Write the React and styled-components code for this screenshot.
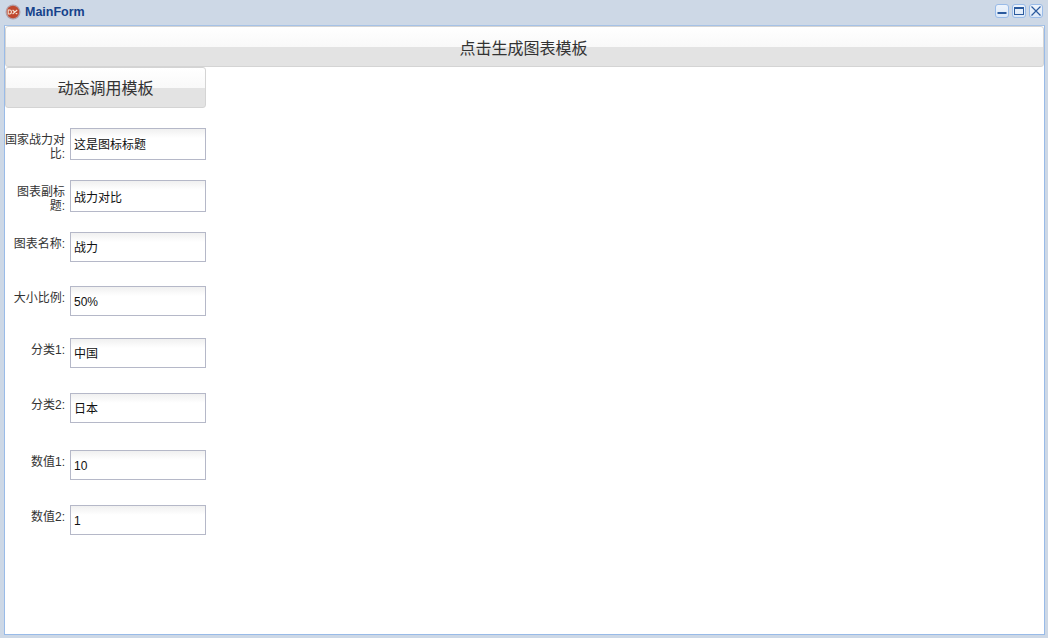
import React from 'react';
import styled, { createGlobalStyle } from 'styled-components';

const Global = createGlobalStyle`
  html, body { margin: 0; padding: 0; background: #cdd8e6; }
  body { font-family: "Liberation Sans", "Noto Sans CJK SC", sans-serif; overflow: hidden; }
`;

const Frame = styled.div`
  width: 1048px;
  height: 638px;
  display: flex;
  flex-direction: column;
  background: #cdd8e6;
  box-sizing: border-box;
  padding: 0 3px 3px 4px;
`;

const TitleBar = styled.div`
  height: 25px;
  flex: none;
  display: flex;
  align-items: center;
  padding-left: 1px;
  margin-right: 2px;
`;

const AppIcon = styled.svg`
  width: 16px;
  height: 16px;
  margin-right: 4px;
  margin-top: -1px;
`;

const Title = styled.div`
  font-size: 12.5px;
  font-weight: bold;
  color: #15428b;
  margin-top: -1px;
  flex: 1;
`;

const WinButtons = styled.div`
  display: flex;
  gap: 3px;
  margin-top: -3px;
`;

const WinButton = styled.div`
  width: 14px;
  height: 14px;
  box-sizing: border-box;
  border: 1px solid #99bbe8;
  border-radius: 3px;
  background: linear-gradient(#eef4fc, #dce8f7);
  display: flex;
  align-items: center;
  justify-content: center;
`;

const Client = styled.div`
  flex: 1;
  background: #fff;
  border: 1px solid #99bbe8;
  border-top-color: #a6c2e6;
  display: flex;
  flex-direction: column;
  min-height: 0;
`;

const Btn = styled.div`
  box-sizing: border-box;
  width: ${p => p.$w};
  height: 41px;
  flex: none;
  border: 1px solid #d4d4d4;
  border-radius: 3px;
  background: linear-gradient(#ffffff 0, #f9f9f9 50%, #e3e3e3 51%, #e3e3e3 100%);
  color: #333;
  font-size: 16px;
  display: flex;
  align-items: center;
  justify-content: center;
  font-family: "DejaVu Sans", "Noto Sans CJK SC", sans-serif;
  padding: 0 ${p => p.$pr || 0}px ${p => p.$pb || 0}px 0;
`;

const Form = styled.div`
  display: flex;
  flex-direction: column;
  padding-top: 20px;
  width: 201px;
`;

const Row = styled.div`
  display: flex;
  align-items: flex-start;
  height: ${p => p.$h}px;
  margin-bottom: ${p => p.$gap}px;
`;

const Label = styled.div`
  width: 60px;
  flex: none;
  text-align: right;
  font-size: 12px;
  line-height: 14px;
  color: #333;
  padding-top: 5px;
  word-break: break-all;
`;

const Field = styled.div`
  box-sizing: border-box;
  margin-left: 5px;
  width: 136px;
  height: 100%;
  border: 1px solid #b5b8c8;
  background: linear-gradient(#f0f0f0 0, #ffffff 9px);
  font-size: 12px;
  color: #111;
  display: flex;
  align-items: center;
  padding: ${p => p.$raised ? '0 0 1px 3px' : '1px 0 0 3px'};
`;

const rows = [
  { label: '国家战力对比:', value: '这是图标标题', h: 32, gap: 20, raised: true },
  { label: '图表副标题:', value: '战力对比', h: 32, gap: 20 },
  { label: '图表名称:', value: '战力', h: 30, gap: 24, raised: true },
  { label: '大小比例:', value: '50%', h: 30, gap: 22 },
  { label: '分类1:', value: '中国', h: 30, gap: 25, raised: true },
  { label: '分类2:', value: '日本', h: 30, gap: 27, raised: true },
  { label: '数值1:', value: '10', h: 30, gap: 25 },
  { label: '数值2:', value: '1', h: 30, gap: 0 },
];

const App = () => (
  <Frame>
    <Global />
    <TitleBar>
      <AppIcon viewBox="0 0 16 16">
        <circle cx="8" cy="8" r="7.5" fill="#b3a0a8" />
        <circle cx="8" cy="8" r="6.2" fill="#c0492f" />
        <path d="M3.2 6h1.6q1.6 0 1.6 2t-1.6 2H3.2zM7.6 6l4.6 4M12.2 6l-4.6 4" stroke="#f4e6d8" strokeWidth="1.1" fill="none" />
      </AppIcon>
      <Title>MainForm</Title>
      <WinButtons>
        <WinButton>
          <svg width="10" height="10" viewBox="0 0 10 10"><rect x="0.5" y="6" width="9" height="2" fill="#2a5a9e" /></svg>
        </WinButton>
        <WinButton>
          <svg width="10" height="10" viewBox="0 0 10 10"><rect x="0.5" y="1.5" width="9" height="7" fill="none" stroke="#2a5a9e" /><rect x="0" y="1" width="10" height="2" fill="#2a5a9e" /></svg>
        </WinButton>
        <WinButton>
          <svg width="10" height="10" viewBox="0 0 10 10"><path d="M0.5 0.5l9 9M9.5 0.5l-9 9" stroke="#2a5a9e" strokeWidth="1.2" /></svg>
        </WinButton>
      </WinButtons>
    </TitleBar>
    <Client>
      <Btn $w="100%" $pr={2}>点击生成图表模板</Btn>
      <Btn $w="201px" $pb={2}>动态调用模板</Btn>
      <Form>
        {rows.map(r => (
          <Row key={r.label} $h={r.h} $gap={r.gap}>
            <Label>{r.label}</Label>
            <Field $raised={r.raised}>{r.value}</Field>
          </Row>
        ))}
      </Form>
    </Client>
  </Frame>
);

export default App;
